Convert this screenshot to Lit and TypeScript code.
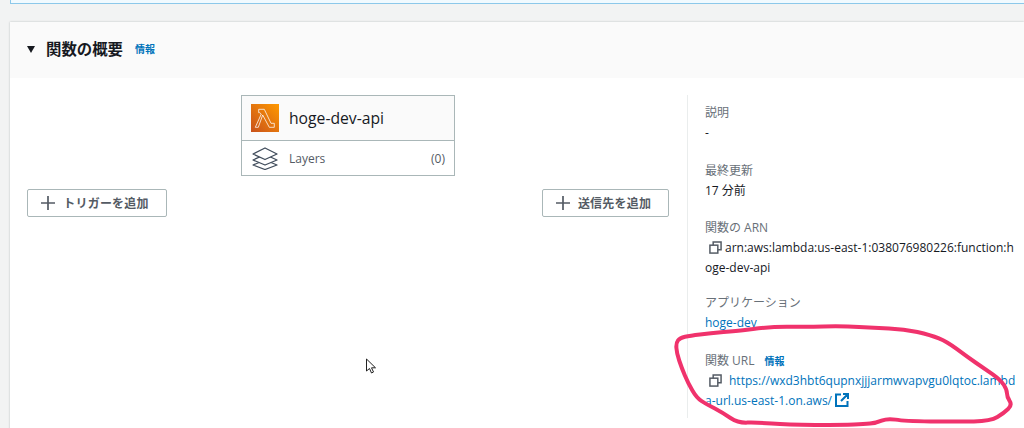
import { LitElement, html, css, svg } from "lit";
import { customElement } from "lit/decorators.js";

const pts: [number, number][] = [
  [753,329],[770,326.7],[803,326.7],[844,326],[874,327.7],[904,329],[930.7,335],[947,341.7],[967,356.7],[984,368.3],[1000.7,380],[1007,390],[1007,396.7],[1012.3,405],[1004,413],[990.7,421],[957,421.7],[904,421],[887.3,418.3],[876,423],[864,424.3],[844,425],[786.7,425],[756.7,422.3],[738,423],[723,413],[706.7,404.3],[696.7,398],[688,383],[681.7,368],[676.7,353],[676,343],[680,337.7],[690,335.7],[710,333.3],[737,331],[753,329],
];
function smooth(p: [number, number][]) {
  let d = `M${p[0][0]} ${p[0][1]}`;
  for (let i = 1; i < p.length - 1; i++) {
    const mx = (p[i][0] + p[i + 1][0]) / 2;
    const my = (p[i][1] + p[i + 1][1]) / 2;
    d += ` Q${p[i][0]} ${p[i][1]} ${mx.toFixed(1)} ${my.toFixed(1)}`;
  }
  const last = p[p.length - 1];
  return `${d} L${last[0]} ${last[1]}`;
}
const inkPath = smooth(pts);

const copyPaths = svg`<rect x="1" y="4.5" width="8.5" height="8.5"/><path d="M4.5 4.5V1H13v8.500H9.500"/>`;

@customElement("app-root")
export class AppRoot extends LitElement {
  static styles = css`
    :host {
      display: block;
      width: 1024px;
      height: 428px;
      overflow: hidden;
      position: relative;
      background: #f2f3f3;
      font-family: "Open Sans", "Noto Sans CJK JP", sans-serif;
      color: #16191f;
      font-size: 12px;
    }
    .alert {
      height: 3px;
      margin-left: 10px;
      border-left: 1px solid #8cc8ea;
      border-bottom: 1.5px solid #8cc8ea;
      background: #f1faff;
    }
    .card {
      margin: 18px 0 0 10px;
      height: 420px;
      background: #fff;
      box-shadow: 0 0 2px rgba(0, 28, 36, 0.25);
    }
    .head {
      height: 56px;
      box-sizing: border-box;
      display: flex;
      align-items: center;
      padding: 0 0 3px 17px;
      background: #fafafa;
    }
    .tri {
      width: 0;
      height: 0;
      border-left: 4.5px solid transparent;
      border-right: 4.5px solid transparent;
      border-top: 7px solid #16191f;
      margin: 2px 10px 0 0;
    }
    .head h2 {
      margin: 0 0 0 1px;
      font-size: 15.4px;
      font-weight: 700;
      color: #16191f;
    }
    .info {
      color: #0073bb;
      font-size: 10px;
      font-weight: 700;
      margin-left: 12px;
    }
    .body {
      display: flex;
    }
    .diagram {
      width: 677px;
      height: 340px;
      box-sizing: border-box;
      padding: 17px 18px 0 17px;
      display: flex;
      flex-direction: column;
    }
    .fn {
      width: 214px;
      height: 81px;
      box-sizing: border-box;
      margin-left: 214px;
      border: 1.5px solid #aab7b8;
      display: flex;
      flex-direction: column;
    }
    .fn-top {
      height: 45px;
      flex: none;
      box-sizing: border-box;
      display: flex;
      align-items: center;
      gap: 10px;
      padding-left: 9px;
      background: #fafafa;
      border-bottom: 1px solid #aab7b8;
      font-size: 15.7px;
      color: #16191f;
    }
    .fn-icon {
      width: 28px;
      height: 28px;
      display: block;
    }
    .fn-bottom {
      flex: 1;
      display: flex;
      align-items: center;
      padding: 0 9px;
      color: #545b64;
      font-size: 12px;
    }
    .layers-icon {
      width: 28px;
      height: 24px;
      margin-right: 10px;
    }
    .count {
      margin-left: auto;
    }
    .btns {
      display: flex;
      justify-content: space-between;
      margin-top: 13px;
    }
    .btn {
      height: 28px;
      box-sizing: border-box;
      border: 1px solid #aab7b8;
      border-radius: 2px;
      background: #fff;
      display: flex;
      align-items: center;
      justify-content: center;
      gap: 8px;
      padding: 0 4px 1px 0;
      color: #545b64;
      font-weight: 700;
      font-size: 12px;
      letter-spacing: 0.2px;
    }
    .btn.a {
      width: 140px;
    }
    .btn.b {
      width: 127px;
    }
    .side {
      border-left: 1px solid #eaeded;
      height: 323px;
      margin-top: 17px;
      padding: 8px 0 0 17px;
      box-sizing: border-box;
      width: 330px;
      flex: none;
      line-height: 20px;
    }
    .item {
      margin-bottom: 17.5px;
    }
    .item.arn {
      margin-bottom: 15px;
    }
    .label {
      color: #687078;
      display: flex;
      align-items: center;
    }
    .label .info {
      margin-left: 10px;
    }
    .val {
      color: #16191f;
      word-break: break-all;
      width: 312px;
    }
    .copy {
      vertical-align: -2px;
      margin: 0 3px 0 4px;
    }
    .copy.url {
      margin-right: 7px;
    }
    a {
      color: #0073bb;
      text-decoration: none;
    }
    .ext {
      vertical-align: -2px;
      margin-left: 3px;
    }
    .ink,
    .cursor {
      position: absolute;
      pointer-events: none;
    }
    .ink {
      left: 0;
      top: 0;
    }
    .cursor {
      left: 365px;
      top: 358px;
    }
  `;

  render() {
    return html`
      <div class="alert"></div>
      <section class="card">
        <header class="head">
          <span class="tri"></span>
          <h2>関数の概要</h2>
          <span class="info">情報</span>
        </header>
        <div class="body">
          <div class="diagram">
            <div class="fn">
              <div class="fn-top">
                <svg class="fn-icon" viewBox="0 0 28 28">
                  <defs>
                    <linearGradient id="g" x1="0" y1="1" x2="1" y2="0">
                      <stop offset="0" stop-color="#c8511b" />
                      <stop offset="1" stop-color="#f90" />
                    </linearGradient>
                  </defs>
                  <rect width="28" height="28" fill="url(#g)" />
                  <path
                    d="M7.700 5.300H13.300L20 19.300H23.300V23.300H18.300L11.700 11 7.300 23.300H4.300L10.300 10 8.700 8.700H7.700Z"
                    fill="none"
                    stroke="#fff"
                    stroke-opacity=".85"
                    stroke-width=".9"
                  />
                </svg>
                <span>hoge-dev-api</span>
              </div>
              <div class="fn-bottom">
                <svg class="layers-icon" viewBox="0 0 28 24" fill="#fff" stroke="#414d5c" stroke-width="1.300" stroke-linejoin="round">
                  <path d="M14 14 26 19 14 23.500 2 19z" />
                  <path d="M14 8.500 26 14 14 19 2 14z" />
                  <path d="M14 2 26 8 14 13.500 2 8z" />
                </svg>
                <span>Layers</span>
                <span class="count">(0)</span>
              </div>
            </div>
            <div class="btns">
              <div class="btn a">
                <svg width="14" height="14" viewBox="0 0 14 14" stroke="#545b64" stroke-width="1.700"><path d="M7 0v14M0 7h14" /></svg>
                トリガーを追加
              </div>
              <div class="btn b">
                <svg width="14" height="14" viewBox="0 0 14 14" stroke="#545b64" stroke-width="1.700"><path d="M7 0v14M0 7h14" /></svg>
                送信先を追加
              </div>
            </div>
          </div>
          <aside class="side">
            <div class="item"><div class="label">説明</div><div class="val">-</div></div>
            <div class="item"><div class="label">最終更新</div><div class="val">17 分前</div></div>
            <div class="item arn">
              <div class="label">関数の ARN</div>
              <div class="val"><svg class="copy" viewBox="0 0 14 14" width="13" height="13" fill="none" stroke="#545b64" stroke-width="1.600">${copyPaths}</svg>arn:aws:lambda:us-east-1:038076980226:function:hoge-dev-api</div>
            </div>
            <div class="item"><div class="label">アプリケーション</div><div class="val"><a>hoge-dev</a></div></div>
            <div class="item">
              <div class="label">関数 URL<span class="info">情報</span></div>
              <div class="val"><svg class="copy url" viewBox="0 0 14 14" width="13" height="13" fill="none" stroke="#545b64" stroke-width="1.600">${copyPaths}</svg><a>https://wxd3hbt6qupnxjjjarmwvapvgu0lqtoc.lambda-url.us-east-1.on.aws/<svg class="ext" width="14" height="14" viewBox="0 0 14 14" fill="none" stroke="#0073bb" stroke-width="2"><path d="M6 1.500H1v11.500h11.500V8M8 1h5v5M13 1 6 8" /></svg></a></div>
            </div>
          </aside>
        </div>
      </section>
      <svg class="cursor" width="14" height="18" viewBox="0 0 14 18">
        <path d="M1.500 1v12l3-2.500 2 4.500 2-1-2-4.200h4z" fill="#fff" stroke="#222" stroke-width="1" />
      </svg>
      <svg class="ink" width="1024" height="428" fill="none">
        ${svg`<path d=${inkPath} stroke="#f0326c" stroke-width="4" stroke-linejoin="round" stroke-linecap="round" />`}
      </svg>
    `;
  }
}
